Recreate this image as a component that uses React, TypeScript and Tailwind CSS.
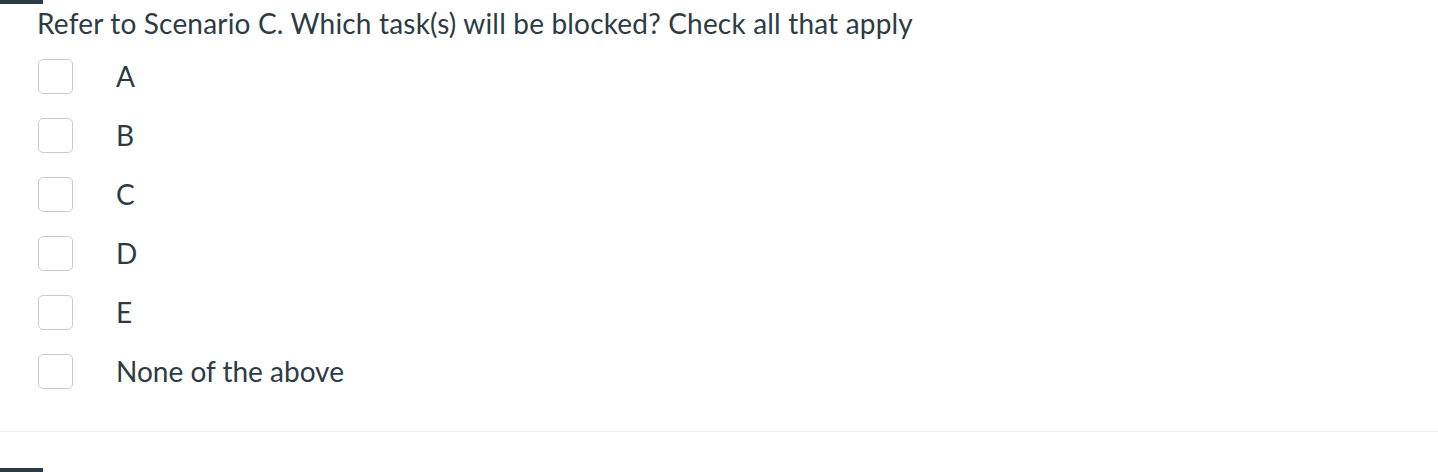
import React from "react";

const options = ["A", "B", "C", "D", "E", "None of the above"];

export default function App() {
  return (
    <div
      className="w-[1438px] h-[472px] bg-white text-[#2d3b45] overflow-hidden"
      style={{ fontFamily: "Lato, 'Open Sans', sans-serif" }}
    >
      <div className="w-[43px] h-[4px] bg-[#2d3b45]" />
      <div className="pl-[37px] text-[28px] leading-[39px] tracking-[0.18px] whitespace-nowrap">
        Refer to Scenario C. Which task(s) will be blocked? Check all that apply
      </div>
      <div className="mt-[4px] flex flex-col">
        {options.map((o) => (
          <label key={o} className="h-[59px] flex items-center pl-[38px]">
            <span className="w-[35px] h-[35px] rounded-[5px] border border-[#c7cdd1] bg-white shrink-0" />
            <span className="ml-[43px] text-[28px] leading-[39px]">{o}</span>
          </label>
        ))}
      </div>
      <div className="mt-[30px] h-px bg-[#eeeeee]" />
      <div className="mt-[36px] w-[43px] h-[4px] bg-[#2d3b45]" />
    </div>
  );
}
